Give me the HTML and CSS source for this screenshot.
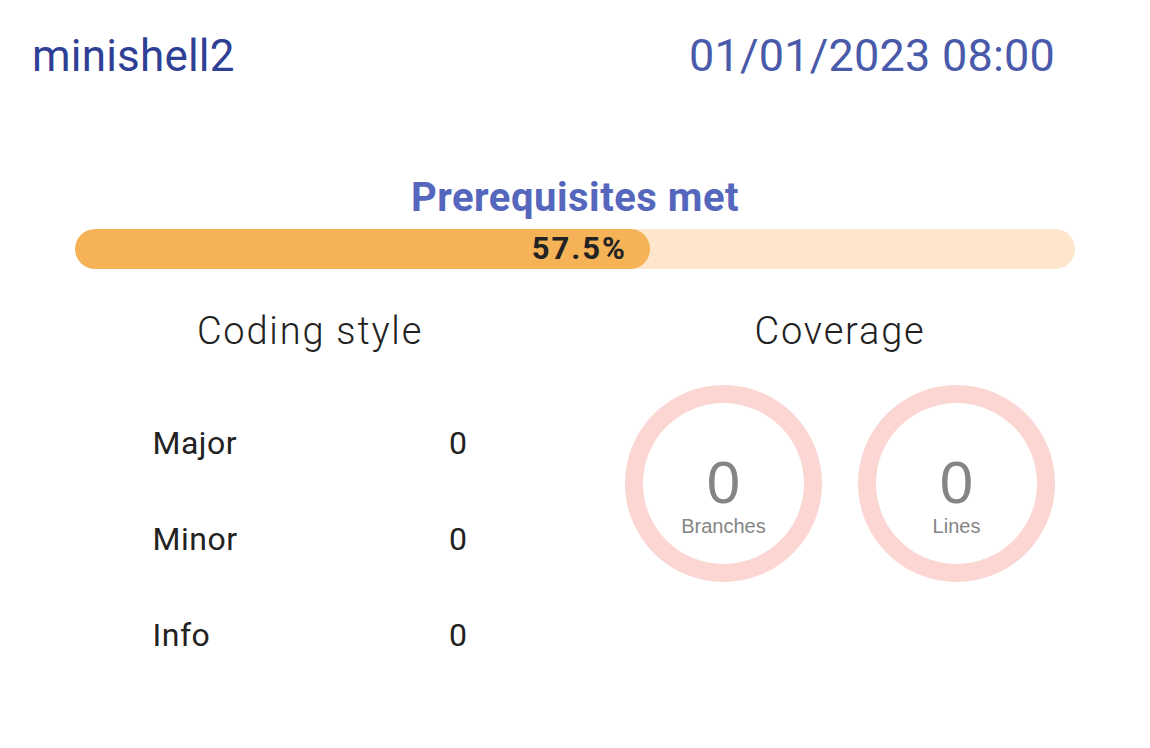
FILE: index.html
```html
<!DOCTYPE html>
<html lang="en">
<head>
<meta charset="utf-8">
<title>minishell2</title>
<link rel="stylesheet" href="styles.css">
</head>
<body>
<header class="header">
  <div class="project">minishell2</div>
  <div class="date">01/01/2023 08:00</div>
</header>
<main class="report">
  <section class="prereq">
    <h2 class="prereq-title">Prerequisites met</h2>
    <div class="bar">
      <div class="bar-fill" style="width: 57.5%"><span class="bar-label">57.5%</span></div>
    </div>
  </section>
  <div class="columns">
    <section class="col">
      <h3 class="col-title">Coding style</h3>
      <div class="style-table">
        <div class="style-row"><span>Major</span><span>0</span></div>
        <div class="style-row"><span>Minor</span><span>0</span></div>
        <div class="style-row"><span>Info</span><span>0</span></div>
      </div>
    </section>
    <section class="col">
      <h3 class="col-title">Coverage</h3>
      <div class="rings">
        <div class="ring"><span class="ring-value">0</span><span class="ring-label">Branches</span></div>
        <div class="ring"><span class="ring-value">0</span><span class="ring-label">Lines</span></div>
      </div>
    </section>
  </div>
</main>
</body>
</html>
```

FILE: styles.css
```css
* { box-sizing: border-box; }
html, body { margin: 0; padding: 0; background: #fff; }
body {
  font-family: Roboto, "Liberation Sans", sans-serif;
  color: #222;
  width: 1150px;
}
.header {
  display: flex;
  justify-content: space-between;
  align-items: flex-start;
  padding: 32px 95px 0 32px;
}
.project {
  font-size: 44px;
  line-height: 48px;
  letter-spacing: 0.2px;
  color: #2f3f96;
}
.date {
  font-size: 45px;
  line-height: 48px;
  letter-spacing: 0.2px;
  color: #4a5aab;
}
.report {
  width: 1000px;
  margin: 0 auto;
}
.prereq-title {
  margin: 98px 0 0;
  text-align: center;
  font-size: 40px;
  line-height: 40px;
  font-weight: 700;
  letter-spacing: 0.5px;
  color: #5567bd;
}
.bar {
  margin-top: 11px;
  height: 40px;
  border-radius: 20px;
  background: #fde6cb;
  overflow: hidden;
}
.bar-fill {
  height: 100%;
  background: #f6b256;
  border-radius: 20px;
  display: flex;
  align-items: center;
  justify-content: flex-end;
  padding-right: 23px;
}
.bar-label {
  font-size: 31px;
  font-weight: 700;
  color: #222;
  line-height: 40px;
  letter-spacing: 2px;
}
.columns {
  display: grid;
  grid-template-columns: 1fr 1fr;
  column-gap: 60px;
  margin-top: 42px;
}
.col { display: flex; flex-direction: column; align-items: center; }
.col-title {
  margin: 0;
  font-size: 38px;
  line-height: 40px;
  font-weight: 300;
  letter-spacing: 1.8px;
  color: #222;
}
.style-table {
  width: 315px;
  margin-top: 74px;
  display: flex;
  flex-direction: column;
  gap: 60px;
}
.style-row {
  display: flex;
  justify-content: space-between;
  font-size: 32px;
  line-height: 36px;
  letter-spacing: 0.5px;
}
.rings {
  display: flex;
  gap: 36px;
  margin-top: 34px;
}
.ring {
  width: 197px;
  height: 197px;
  border-radius: 50%;
  border: 18px solid #fbd6d3;
  padding-top: 23px;
  display: flex;
  flex-direction: column;
  align-items: center;
  justify-content: center;
  font-family: "Liberation Sans", Arial, sans-serif;
  color: #858585;
}
.ring-value {
  font-size: 60px;
  line-height: 60px;
}
.ring-label {
  margin-top: 2px;
  font-size: 20px;
  line-height: 22px;
}
```
